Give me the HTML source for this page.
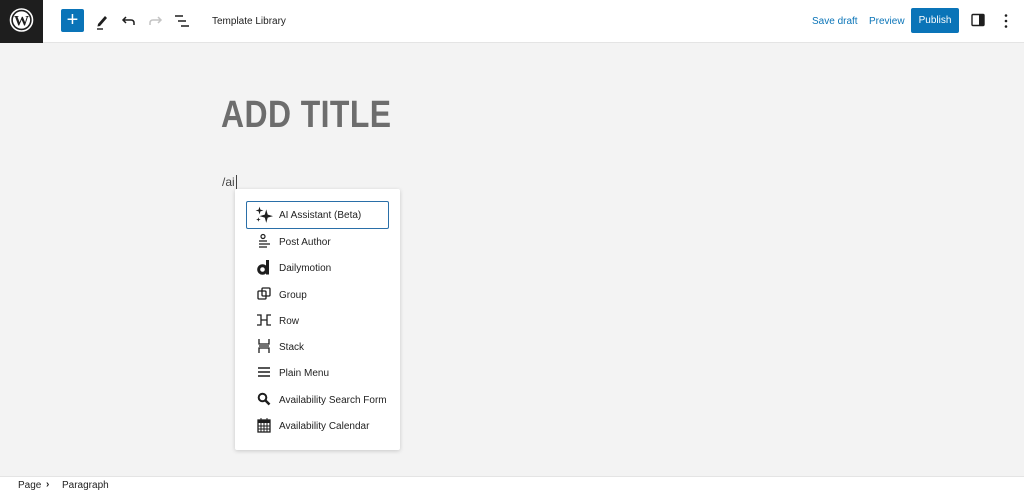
<!DOCTYPE html>
<html><head><meta charset="utf-8"><style>
*{margin:0;padding:0;box-sizing:border-box}
body{width:1024px;height:492px;overflow:hidden;background:#f3f3f3;font-family:"Liberation Sans",sans-serif;position:relative;color:#1e1e1e}
.top{position:absolute;left:0;top:0;width:1024px;height:43px;background:#fff;border-bottom:1px solid #e4e4e4}
.wp{position:absolute;left:0;top:0;width:43px;height:43px;background:#1e1e1e}
.abs{position:absolute}
.plus{left:61px;top:9px;width:23px;height:23px;background:#0a74b8;border-radius:2px;color:#fff;font-size:20px;line-height:22px;text-align:center}
.t{font-size:10px}
.pub{left:911px;top:8px;width:48px;height:25px;background:#0a74b8;border-radius:2px;color:#fff;font-size:10px;line-height:26px;text-align:center}
.title{left:221px;top:94px;font-size:38px;font-weight:bold;color:#6d6d6d;transform:scaleX(0.84);transform-origin:left top;letter-spacing:0.5px}
.pop{left:235px;top:189px;width:165px;height:261px;background:#fff;box-shadow:0 1px 4px rgba(0,0,0,.18);border-radius:2px}
.sel{left:246px;top:201px;width:143px;height:28px;border:1.5px solid #2a6fa8;border-radius:2px}
.it{position:absolute;left:279px;font-size:10px;color:#1e1e1e}
.ic{position:absolute;left:256px;width:16px;height:16px}
.foot{position:absolute;left:0;top:476px;width:1024px;height:16px;background:#fff;border-top:1px solid #e4e4e4}
</style></head><body>
<div class="top">
<div class="wp"><svg width="43" height="43" viewBox="0 0 43 43"><circle cx="21.5" cy="20" r="11" fill="none" stroke="#fff" stroke-width="1.6"/><circle cx="21.5" cy="20" r="8.6" fill="#fff"/><text x="21.5" y="25.5" fill="#1e1e1e" font-family="Liberation Serif" font-weight="bold" font-size="15" text-anchor="middle">W</text></svg></div>
<div class="abs plus">+</div>
<svg class="abs" style="left:94px;top:11px" width="16" height="20" viewBox="0 0 16 20"><path d="M4 13 L11 5 L13 7 L6 15 L3.5 15.5Z" fill="#1e1e1e"/><path d="M3 18h6" stroke="#1e1e1e" stroke-width="1.4"/></svg>
<svg class="abs" style="left:121px;top:13px" width="16" height="16" viewBox="0 0 16 16"><path d="M5 4 L2 7 L5 10 M2 7 H10 Q13 7 13 10 V12" fill="none" stroke="#1e1e1e" stroke-width="1.5"/></svg>
<svg class="abs" style="left:147px;top:13px" width="16" height="16" viewBox="0 0 16 16"><path d="M11 4 L14 7 L11 10 M14 7 H6 Q3 7 3 10 V12" fill="none" stroke="#c4c4c4" stroke-width="1.5"/></svg>
<svg class="abs" style="left:173px;top:13px" width="18" height="16" viewBox="0 0 18 16"><path d="M2 3h8M5 8h8M8 13h8" stroke="#1e1e1e" stroke-width="1.5"/></svg>
<div class="abs t" style="left:212px;top:16px">Template Library</div>
<div class="abs t" style="left:812px;top:16px;color:#0a74b8">Save draft</div>
<div class="abs t" style="left:869px;top:16px;color:#0a74b8">Preview</div>
<div class="abs pub">Publish</div>
<svg class="abs" style="left:971px;top:13px" width="14" height="14" viewBox="0 0 14 14"><rect x="1" y="1.5" width="12" height="11" rx="1" fill="none" stroke="#1e1e1e" stroke-width="1.4"/><rect x="8" y="1.5" width="5" height="11" fill="#1e1e1e"/></svg>
<svg class="abs" style="left:1004px;top:13px" width="4" height="16" viewBox="0 0 4 16"><circle cx="2" cy="2.5" r="1.3" fill="#1e1e1e"/><circle cx="2" cy="8" r="1.3" fill="#1e1e1e"/><circle cx="2" cy="13.5" r="1.3" fill="#1e1e1e"/></svg>
</div>
<div class="abs title">ADD TITLE</div>
<div class="abs" style="left:222px;top:175px;font-size:12px;color:#444">/ai<span style="border-left:1px solid #444;margin-left:1px"></span></div>
<div class="abs pop"></div>
<div class="abs sel"></div>
<svg class="ic" style="top:206px;left:255px;width:18px;height:18px" viewBox="0 0 16 16"><path d="M10 3 L11.3 7.7 L16 9 L11.3 10.3 L10 15 L8.7 10.3 L4 9 L8.7 7.7Z M4 0.5 L4.8 3.2 L7.5 4 L4.8 4.8 L4 7.5 L3.2 4.8 L0.5 4 L3.2 3.2Z M3 10 L3.5 11.5 L5 12 L3.5 12.5 L3 14 L2.5 12.5 L1 12 L2.5 11.5Z" fill="#1e1e1e"/></svg>
<div class="it" style="top:210px">AI Assistant (Beta)</div>
<svg class="ic" style="top:233px" viewBox="0 0 16 16"><circle cx="7" cy="3.5" r="2" fill="none" stroke="#1e1e1e" stroke-width="1.2"/><path d="M3 8h8M3 11h11M3 14h8" stroke="#1e1e1e" stroke-width="1.2"/></svg>
<div class="it" style="top:237px">Post Author</div>
<svg class="ic" style="top:259px" viewBox="0 0 16 16"><circle cx="6.5" cy="10.5" r="3.8" fill="none" stroke="#1e1e1e" stroke-width="3"/><rect x="10" y="1" width="3" height="14.5" fill="#1e1e1e"/></svg>
<div class="it" style="top:263px">Dailymotion</div>
<svg class="ic" style="top:286px" viewBox="0 0 16 16"><rect x="2" y="5" width="8" height="8" rx="1" fill="none" stroke="#1e1e1e" stroke-width="1.3"/><rect x="6" y="2" width="8" height="8" rx="1" fill="none" stroke="#1e1e1e" stroke-width="1.3"/></svg>
<div class="it" style="top:290px">Group</div>
<svg class="ic" style="top:312px" viewBox="0 0 16 16"><path d="M1 3h4v10H1M15 3h-4v10h4M5 8h6" fill="none" stroke="#1e1e1e" stroke-width="1.3"/></svg>
<div class="it" style="top:316px">Row</div>
<svg class="ic" style="top:338px" viewBox="0 0 16 16"><path d="M3 1v5h10V1M3 15v-5h10v5M3 8h10" fill="none" stroke="#1e1e1e" stroke-width="1.3"/></svg>
<div class="it" style="top:342px">Stack</div>
<svg class="ic" style="top:364px" viewBox="0 0 16 16"><path d="M2 4h12M2 8h12M2 12h12" stroke="#1e1e1e" stroke-width="1.5"/></svg>
<div class="it" style="top:368px">Plain Menu</div>
<svg class="ic" style="top:391px" viewBox="0 0 16 16"><circle cx="6.5" cy="6.5" r="3.8" fill="none" stroke="#1e1e1e" stroke-width="2"/><path d="M9.5 9.5L13.5 13.5" stroke="#1e1e1e" stroke-width="2.5"/></svg>
<div class="it" style="top:395px">Availability Search Form</div>
<svg class="ic" style="top:417px" viewBox="0 0 16 16"><rect x="2" y="3" width="12" height="12" fill="none" stroke="#1e1e1e" stroke-width="1.3"/><rect x="2" y="3" width="12" height="3" fill="#1e1e1e"/><path d="M5 1v3M11 1v3M2 9h12M2 12h12M5 6v9M8 6v9M11 6v9" stroke="#1e1e1e" stroke-width="1"/></svg>
<div class="it" style="top:421px">Availability Calendar</div>
<div class="foot"></div>
<div class="abs t" style="left:18px;top:480px">Page</div>
<div class="abs t" style="left:46px;top:479px;font-weight:bold">›</div>
<div class="abs t" style="left:62px;top:480px">Paragraph</div>
</body></html>
